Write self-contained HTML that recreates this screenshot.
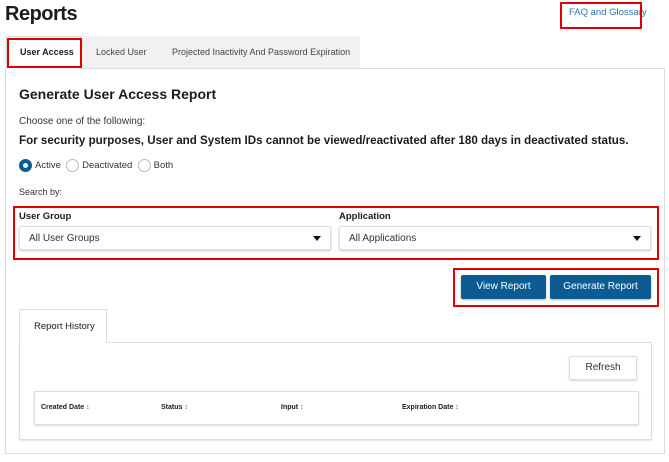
<!DOCTYPE html><html><head><style>
*{margin:0;padding:0;box-sizing:border-box}
body{width:669px;height:462px;background:#fff;font-family:"Liberation Sans",Arial,sans-serif;color:#1b1b1b;position:relative;overflow:hidden}
.a{position:absolute;white-space:nowrap}
.red{position:absolute;border:2px solid #e00000}
.sel{position:absolute;height:24px;border:1px solid #ddd;border-radius:2px;box-shadow:0 1px 2px rgba(0,0,0,.2);font-size:10px;padding:6px 9px;color:#333}
.sel:after{content:"";position:absolute;right:9px;top:9px;border-left:4px solid transparent;border-right:4px solid transparent;border-top:5px solid #111}
.btn{position:absolute;height:24px;background:#0b5c93;color:#fff;font-size:10px;text-align:center;line-height:24px;border-radius:2px;box-shadow:0 1px 2px rgba(0,0,0,.3)}
.rad{display:inline-block;width:13px;height:13px;border:1px solid #bbb;border-radius:50%;vertical-align:middle;margin-right:3px}
.th{position:absolute;top:404px;font-size:7px;font-weight:bold}
.th:after{content:" \2195";color:#1a6eb5}
</style></head><body>
<div class="a" style="left:5px;top:3px;font-size:20px;font-weight:bold;letter-spacing:-0.5px">Reports</div>
<div class="a" style="left:569px;top:7px;font-size:9.5px;color:#2a74b8">FAQ and Glossary</div>
<div class="red" style="left:560px;top:2px;width:82px;height:27px"></div>
<div class="a" style="left:5px;top:68px;width:660px;height:386px;border:1px solid #ddd"></div>
<div class="a" style="left:5px;top:36px;width:355px;height:32px;background:#f1f1f1"></div>
<div class="a" style="left:6px;top:36px;width:75px;height:33px;background:#fff;border:1px solid #ddd;border-bottom:none"></div>
<div class="a" style="left:20px;top:47px;font-size:9px;font-weight:bold">User Access</div>
<div class="a" style="left:96px;top:47px;font-size:9px;color:#444">Locked User</div>
<div class="a" style="left:172px;top:47px;font-size:9px;color:#444">Projected Inactivity And Password Expiration</div>
<div class="red" style="left:7px;top:38px;width:75px;height:30px"></div>
<div class="a" style="left:19px;top:86px;font-size:14px;font-weight:bold">Generate User Access Report</div>
<div class="a" style="left:19px;top:116px;font-size:10px;color:#333">Choose one of the following:</div>
<div class="a" style="left:19px;top:134px;font-size:11.6px;font-weight:bold">For security purposes, User and System IDs cannot be viewed/reactivated after 180 days in deactivated status.</div>
<div class="a" style="left:19px;top:159px;font-size:9.5px;color:#333"><span class="rad" style="border:4px solid #0b5c93"></span>Active&nbsp;&nbsp;<span class="rad"></span>Deactivated&nbsp;&nbsp;<span class="rad"></span>Both</div>
<div class="a" style="left:19px;top:187px;font-size:9px;color:#333">Search by:</div>
<div class="a" style="left:19px;top:211px;font-size:9.5px;font-weight:bold">User Group</div>
<div class="a" style="left:339px;top:211px;font-size:9.5px;font-weight:bold">Application</div>
<div class="sel" style="left:19px;top:226px;width:312px">All User Groups</div>
<div class="sel" style="left:339px;top:226px;width:312px">All Applications</div>
<div class="red" style="left:13px;top:206px;width:646px;height:54px"></div>
<div class="btn" style="left:461px;top:275px;width:85px">View Report</div>
<div class="btn" style="left:550px;top:275px;width:101px">Generate Report</div>
<div class="red" style="left:453px;top:268px;width:206px;height:39px"></div>
<div class="a" style="left:19px;top:342px;width:633px;height:98px;border:1px solid #ddd;box-shadow:0 1px 1px rgba(0,0,0,.1)"></div>
<div class="a" style="left:19px;top:309px;width:88px;height:34px;border:1px solid #ddd;border-bottom:none;background:#fff"></div>
<div class="a" style="left:34px;top:321px;font-size:9.5px">Report History</div>
<div class="a" style="left:569px;top:356px;width:68px;height:24px;border:1px solid #ddd;border-radius:2px;box-shadow:0 1px 2px rgba(0,0,0,.15);font-size:10px;text-align:center;line-height:22px;color:#333">Refresh</div>
<div class="a" style="left:34px;top:391px;width:605px;height:34px;border:1px solid #ddd;box-shadow:0 1px 2px rgba(0,0,0,.15)"></div>
<div class="th" style="left:41px">Created Date</div>
<div class="th" style="left:161px">Status</div>
<div class="th" style="left:281px">Input</div>
<div class="th" style="left:402px">Expiration Date</div>
</body></html>
